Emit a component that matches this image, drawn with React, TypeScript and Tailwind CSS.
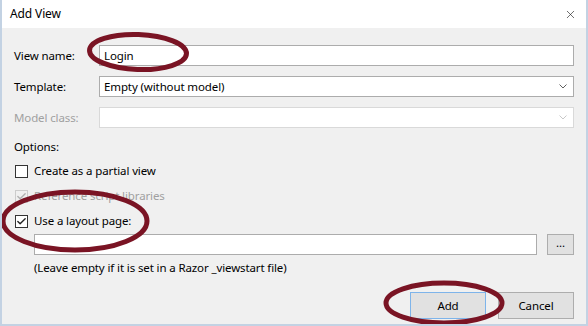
import { Check, X } from 'lucide-react'

function Chevron({ disabled }: { disabled?: boolean }) {
  return (
    <svg width="8" height="5" viewBox="0 0 8 5" className="mr-[6px]">
      <polyline points="0.5,0.5 4,4 7.5,0.5" fill="none" stroke={disabled ? '#c8c8c8' : '#606060'} strokeWidth="1" />
    </svg>
  )
}

function CheckBox({ checked, disabled }: { checked?: boolean; disabled?: boolean }) {
  return (
    <div
      className={`w-[13px] h-[13px] ml-[1px] flex items-center justify-center border ${
        disabled ? 'border-[#cccccc] bg-[#f0f0f0]' : 'border-[#333333] bg-white'
      }`}
    >
      {checked && <Check size={11} strokeWidth={3} color={disabled ? '#b0b0b0' : '#222222'} />}
    </div>
  )
}

function App() {
  return (
    <div
      className="relative w-[588px] h-[326px] overflow-hidden flex flex-col bg-[#f0f0f0] border-x-2 border-b-2 border-[#c3d2e3] text-[11.5px] tracking-[-0.12px] text-black"
      style={{ fontFamily: '"Noto Sans", "Open Sans", sans-serif' }}
    >
      <header className="h-[28px] shrink-0 bg-white flex items-center justify-between pl-[8px] pr-[9px]">
        <span className="leading-none text-[12px]">Add View</span>
        <X size={13} strokeWidth={1.2} color="#222" />
      </header>

      <main className="flex-1 flex flex-col pl-[12px] pr-[12px] pt-[17px]">
        <div className="flex flex-col gap-[10px]">
          <div className="flex items-center h-[21px]">
            <label className="w-[85px] shrink-0">View name:</label>
            <div className="flex-1 h-full bg-white border border-[#acacac] flex items-center px-[4px]">Login</div>
          </div>
          <div className="flex items-center h-[21px]">
            <label className="w-[85px] shrink-0">Template:</label>
            <div className="flex-1 h-full bg-white border border-[#acacac] flex items-center justify-between pl-[4px]">
              <span>Empty (without model)</span>
              <Chevron />
            </div>
          </div>
          <div className="flex items-center h-[21px]">
            <label className="w-[85px] shrink-0 text-[#a0a0a0]">Model class:</label>
            <div className="flex-1 h-full bg-white border border-[#d9d9d9] flex items-center justify-end">
              <Chevron disabled />
            </div>
          </div>
        </div>

        <div className="mt-[11px] h-[16px] flex items-center">Options:</div>

        <div className="mt-[8px] flex flex-col gap-[9px]">
          <div className="flex items-center gap-[6px] h-[16px]">
            <CheckBox />
            <span>Create as a partial view</span>
          </div>
          <div className="flex items-center gap-[6px] h-[16px] text-[#a0a0a0]">
            <CheckBox checked disabled />
            <span>Reference script libraries</span>
          </div>
          <div className="flex items-center gap-[6px] h-[16px]">
            <CheckBox checked />
            <span>Use a layout page:</span>
          </div>
        </div>

        <div className="mt-[5px] pl-[20px] flex items-center gap-[10px] h-[21px]">
          <div className="flex-1 h-full bg-white border border-[#acacac]" />
          <button className="w-[27px] h-full bg-[#e1e1e1] border border-[#adadad] flex items-center justify-center leading-none pb-[3px]">
            ...
          </button>
        </div>

        <div className="mt-[5px] pl-[20px] h-[16px] flex items-center">
          (Leave empty if it is set in a Razor _viewstart file)
        </div>

        <div className="mt-[16px] flex justify-end gap-[12px]">
          <button className="w-[76px] h-[27px] bg-[#e1e1e1] border border-[#7eb4ea]">Add</button>
          <button className="w-[76px] h-[27px] bg-[#e1e1e1] border border-[#adadad]">Cancel</button>
        </div>
      </main>

      <svg className="absolute inset-0 pointer-events-none" width="588" height="326" viewBox="0 0 588 326">
        <g fill="none" stroke="#7a1424" strokeWidth="5">
          <ellipse cx="136" cy="52" rx="48.5" ry="17.5" transform="rotate(2 136 52)" />
          <ellipse cx="73" cy="221" rx="72" ry="29" />
          <ellipse cx="442" cy="303" rx="58" ry="20" />
        </g>
      </svg>
    </div>
  )
}

export default App
